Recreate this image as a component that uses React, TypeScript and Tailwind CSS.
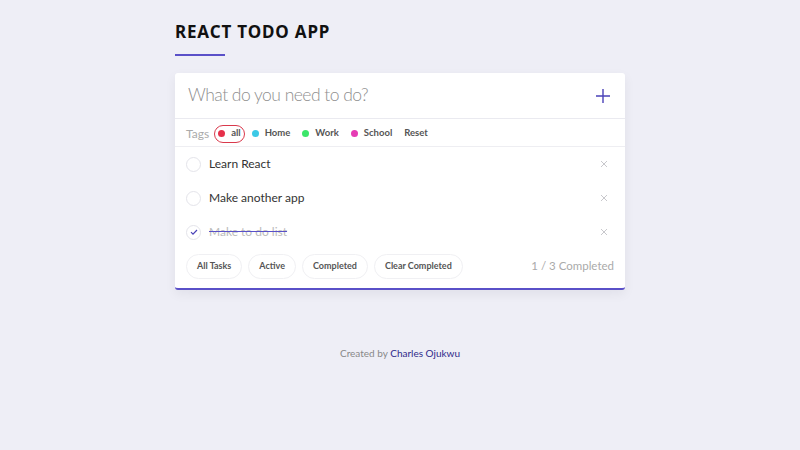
import React from 'react';

const tags = [
  { name: 'Home', color: 'bg-[#3cc9e6]' },
  { name: 'Work', color: 'bg-[#3ce66a]' },
  { name: 'School', color: 'bg-[#e63cb4]' },
];

const todos = [
  { text: 'Learn React', done: false },
  { text: 'Make another app', done: false },
  { text: 'Make to do list', done: true },
];

const filters = ['All Tasks', 'Active', 'Completed', 'Clear Completed'];

const App = () => {
  return (
    <div className="min-h-[450px] w-full bg-[#eeeef6] font-['Lato',sans-serif] text-[#333]">
      <div className="mx-auto w-[450px] pt-[20px]">
        <h1 className="font-['Noto_Sans',sans-serif] text-[17px] font-bold leading-[24px] tracking-[0.05em] text-[#111]">REACT TODO APP</h1>
        <div className="mt-[10px] h-[2px] w-[50px] bg-[#5a50c8]" />

        <div className="mt-[17px] rounded-[3px] border-b-2 border-[#5a50c8] bg-white shadow-[0_4px_12px_rgba(0,0,40,0.06)]">
          <div className="flex h-[46px] items-center justify-between border-b border-[#eaeaf0] pl-[13px] pr-[14px]">
            <span className="text-[17.5px] font-light tracking-[-0.03em] text-[#8f8f8f]">What do you need to do?</span>
            <svg width="16" height="16" viewBox="0 0 16 16" className="text-[#4a42b8]">
              <path d="M8 1v14M1 8h14" stroke="currentColor" strokeWidth="1.4" />
            </svg>
          </div>

          <div className="flex h-[28px] items-center border-b border-[#eeeef2] pl-[11px] pt-[2px] text-[9.5px] font-bold text-[#555]">
            <span className="mr-[5px] text-[12px] font-normal text-[#aaa]">Tags</span>
            <span className="mr-[7px] flex h-[18px] items-center gap-[6px] rounded-full border-[1.5px] border-[#d9394c] px-[3px]">
              <span className="h-[7px] w-[7px] rounded-full bg-[#e6304a]" />
              <span>all</span>
            </span>
            {tags.map((t) => (
              <span key={t.name} className="mr-[12px] flex items-center gap-[6px]">
                <span className={`h-[7px] w-[7px] rounded-full ${t.color}`} />
                <span>{t.name}</span>
              </span>
            ))}
            <span>Reset</span>
          </div>

          <div>
            {todos.map((t) => (
              <div key={t.text} className="flex h-[34px] items-center pl-[11px] pr-[17px]">
                <span className="flex h-[15px] w-[15px] items-center justify-center rounded-full border border-[#e4e4ea]">
                  {t.done && (
                    <svg width="8" height="8" viewBox="0 0 8 8">
                      <path d="M1 4.2l2 2L7 2" stroke="#4a42b8" strokeWidth="1.2" fill="none" />
                    </svg>
                  )}
                </span>
                <span
                  className={
                    t.done
                      ? 'ml-[8px] flex-1 text-[12px] text-[#bbb] line-through decoration-[#5a50c8]'
                      : 'ml-[8px] flex-1 text-[12px] text-[#333]'
                  }
                >
                  {t.text}
                </span>
                <svg width="8" height="8" viewBox="0 0 8 8">
                  <path d="M1 1l6 6M7 1L1 7" stroke="#c8c8cc" strokeWidth="1" />
                </svg>
              </div>
            ))}
          </div>

          <div className="flex h-[39px] items-center justify-between pb-[5px] pl-[11px] pr-[11px]">
            <div className="flex gap-[6px]">
              {filters.map((f) => (
                <span
                  key={f}
                  className="flex h-[25px] items-center rounded-full border border-[#f0f0f3] px-[10px] text-[9px] font-bold text-[#555]"
                >
                  {f}
                </span>
              ))}
            </div>
            <span className="text-[11.5px] text-[#aaa]">1 / 3 Completed</span>
          </div>
        </div>

        <p className="mt-[56px] text-center text-[10px] text-[#888]">
          Created by <span className="text-[#2e2a8a]">Charles Ojukwu</span>
        </p>
      </div>
    </div>
  );
};

export default App;
